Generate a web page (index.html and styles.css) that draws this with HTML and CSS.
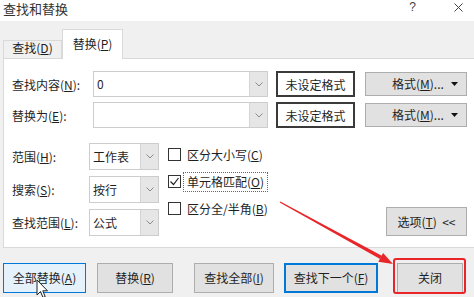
FILE: index.html
```html
<!DOCTYPE html>
<html lang="zh-CN">
<head>
    <meta charset="UTF-8">
    <meta name="viewport" content="width=device-width, initial-scale=1.0">
    <title>查找和替换</title>
    <link rel="stylesheet" href="styles.css">
</head>
<body>
    <div class="dialog">
        <div class="titlebar">
            <span class="title">查找和替换</span>
            <span class="help">?</span>
            <span class="close-x">
                <svg width="9" height="9" viewBox="0 0 9 9"><path d="M0.5 0.5 L8.5 8.5 M8.5 0.5 L0.5 8.5" stroke="#444" stroke-width="1"/></svg>
            </span>
        </div>

        <div class="tabs">
            <div class="tab">查找(<u>D</u>)</div>
            <div class="tab active">替换(<u>P</u>)</div>
        </div>

        <div class="panel">
            <div class="field-row">
                <span class="field-label">查找内容(<u>N</u>):</span>
                <div class="combo">
                    <span class="combo-text">0</span>
                    <span class="drop"><svg width="8" height="5" viewBox="0 0 8 5"><path d="M0.5 0.5 L4 4 L7.5 0.5" fill="none" stroke="#8a8a8a"/></svg></span>
                </div>
                <div class="preview">未设定格式</div>
                <button class="btn format-btn">格式(<u>M</u>)... <svg class="caret" width="7" height="4" viewBox="0 0 7 4"><path d="M0 0 H7 L3.5 4 Z" fill="#111"/></svg></button>
            </div>
            <div class="field-row">
                <span class="field-label">替换为(<u>E</u>):</span>
                <div class="combo">
                    <span class="combo-text"></span>
                    <span class="drop"><svg width="8" height="5" viewBox="0 0 8 5"><path d="M0.5 0.5 L4 4 L7.5 0.5" fill="none" stroke="#8a8a8a"/></svg></span>
                </div>
                <div class="preview">未设定格式</div>
                <button class="btn format-btn">格式(<u>M</u>)... <svg class="caret" width="7" height="4" viewBox="0 0 7 4"><path d="M0 0 H7 L3.5 4 Z" fill="#111"/></svg></button>
            </div>

            <div class="options">
                <div class="selects">
                    <div class="select-row">
                        <span class="opt-label">范围(<u>H</u>):</span>
                        <div class="select">
                            <span class="select-text">工作表</span>
                            <span class="drop"><svg width="8" height="5" viewBox="0 0 8 5"><path d="M0.5 0.5 L4 4 L7.5 0.5" fill="none" stroke="#8a8a8a"/></svg></span>
                        </div>
                    </div>
                    <div class="select-row">
                        <span class="opt-label">搜索(<u>S</u>):</span>
                        <div class="select">
                            <span class="select-text">按行</span>
                            <span class="drop"><svg width="8" height="5" viewBox="0 0 8 5"><path d="M0.5 0.5 L4 4 L7.5 0.5" fill="none" stroke="#8a8a8a"/></svg></span>
                        </div>
                    </div>
                    <div class="select-row">
                        <span class="opt-label">查找范围(<u>L</u>):</span>
                        <div class="select">
                            <span class="select-text">公式</span>
                            <span class="drop"><svg width="8" height="5" viewBox="0 0 8 5"><path d="M0.5 0.5 L4 4 L7.5 0.5" fill="none" stroke="#8a8a8a"/></svg></span>
                        </div>
                    </div>
                </div>

                <div class="checks">
                    <div class="check-row">
                        <span class="box"></span>
                        <span class="check-label">区分大小写(<u>C</u>)</span>
                    </div>
                    <div class="check-row">
                        <span class="box"><svg width="11" height="11" viewBox="0 0 11 11"><path d="M1.5 5.5 L4.5 8.5 L9.5 2" fill="none" stroke="#222" stroke-width="1.2"/></svg></span>
                        <span class="check-label focus">单元格匹配(<u>O</u>)</span>
                    </div>
                    <div class="check-row">
                        <span class="box"></span>
                        <span class="check-label">区分全/半角(<u>B</u>)</span>
                    </div>
                </div>

                <button class="btn options-btn">选项(<u>T</u>)&nbsp;&nbsp;&lt;&lt;</button>
            </div>
        </div>

        <div class="actions">
            <button class="btn btn-all default">全部替换(<u>A</u>)</button>
            <button class="btn btn-replace">替换(<u>R</u>)</button>
            <button class="btn btn-findall">查找全部(<u>I</u>)</button>
            <button class="btn btn-next focused">查找下一个(<u>F</u>)</button>
            <div class="close-wrap">
                <button class="btn btn-close">关闭</button>
            </div>
        </div>

        <!-- annotation: red arrow pointing at the close button -->
        <svg class="arrow" width="474" height="297" viewBox="0 0 474 297">
            <polygon points="280.3,201.4 279.7,202.6 380.1,258.9 381.8,255.7" fill="#e8262a"/>
            <polygon points="393,264 378.3,261.7 383.1,252.9" fill="#e8262a"/>
        </svg>

        <svg class="cursor" width="13" height="20" viewBox="0 0 13 20">
            <path d="M1 1 L1 16 L4.5 12.5 L7 18.5 L9.2 17.6 L6.8 11.8 L11.5 11.8 Z" fill="#fff" stroke="#222" stroke-width="1"/>
        </svg>
    </div>
</body>
</html>
```

FILE: styles.css
```css
* {
    box-sizing: border-box;
}
body {
    margin: 0;
    width: 474px;
    height: 297px;
    overflow: hidden;
    background: #f0f0f0;
    font-family: "Noto Sans CJK SC", "Noto Sans", sans-serif;
    font-size: 12px;
    color: #1f1f1f;
}
u {
    text-decoration-thickness: 1px;
    text-underline-offset: 1px;
}
.dialog {
    position: relative;
    height: 297px;
}
.titlebar {
    height: 21px;
    background: #fff;
    display: flex;
    align-items: flex-start;
    overflow: hidden;
}
.title {
    margin: 2px 0 0 3px;
    font-size: 13px;
    line-height: 14px;
    color: #333;
}
.help {
    margin: 1px 0 0 auto;
    font-family: "Liberation Sans", sans-serif;
    font-size: 12px;
    line-height: 13px;
    color: #444;
}
.close-x {
    margin: 3px 11px 0 38px;
    display: flex;
}
.tabs {
    height: 37px;
    display: flex;
    align-items: flex-end;
    padding-left: 3px;
}
.tab {
    width: 59px;
    height: 18px;
    border: 1px solid #d9d9d9;
    border-bottom: none;
    background: #f0f0f0;
    display: flex;
    align-items: center;
    justify-content: center;
    padding-bottom: 3px;
    line-height: 16px;
}
.tab.active {
    width: 61px;
    height: 30px;
    margin-bottom: -1px;
    background: #fff;
    position: relative;
    padding-bottom: 1px;
}
.panel {
    margin-left: 3px;
    width: 472px;
    background: #fff;
    border: 1px solid #d9d9d9;
    padding: 12px 7px 11px 8px;
}
.field-row {
    display: flex;
    align-items: center;
    height: 26px;
}
.field-row + .field-row {
    margin-top: 5px;
}
.field-label {
    width: 81px;
}
.combo {
    width: 175px;
    height: 26px;
    border: 1px solid #cdcdcd;
    display: flex;
}
.combo-text {
    flex: 1;
    padding-left: 3px;
    line-height: 24px;
}
.drop {
    width: 18px;
    border-left: 1px solid #d4d4d4;
    background: #e6e6e6;
    display: flex;
    align-items: center;
    justify-content: center;
}
.preview {
    margin-left: 8px;
    width: 79px;
    height: 26px;
    border: 2px solid #3a3a3a;
    display: flex;
    align-items: center;
    justify-content: center;
}
.btn {
    font: inherit;
    color: inherit;
    background: #e1e1e1;
    border: 1px solid #adadad;
    padding: 0;
    display: flex;
    align-items: center;
    justify-content: center;
    line-height: 16px;
}
.format-btn {
    margin-left: 10px;
    width: 102px;
    height: 24px;
    justify-content: flex-start;
    padding-left: 26px;
}
.caret {
    margin: 0 8px 0 auto;
}
.options {
    display: flex;
    margin-top: 15px;
}
.selects {
    display: flex;
    flex-direction: column;
    gap: 6px;
}
.select-row {
    display: flex;
    align-items: center;
    height: 27px;
}
.opt-label {
    width: 77px;
}
.select {
    width: 70px;
    height: 27px;
    border: 1px solid #cdcdcd;
    display: flex;
}
.select-text {
    flex: 1;
    padding-left: 3px;
    line-height: 25px;
}
.checks {
    margin: -2px 0 0 9px;
    display: flex;
    flex-direction: column;
}
.check-row {
    height: 27px;
    display: flex;
    align-items: center;
}
.box {
    width: 13px;
    height: 13px;
    border: 1px solid #333;
    background: #fff;
    display: flex;
    align-items: center;
    justify-content: center;
}
.check-label {
    margin-left: 2px;
    padding: 1px 3px;
    border: 1px dotted transparent;
    line-height: 16px;
}
.check-label.focus {
    border-color: #666;
}
.options-btn {
    margin-left: auto;
    align-self: flex-end;
    width: 81px;
    height: 29px;
}
.actions {
    display: flex;
    align-items: flex-start;
    margin-top: 15px;
    padding-left: 3px;
}
.actions .btn {
    height: 30px;
}
.btn-all {
    width: 83px;
}
.btn.default {
    background: #e5f1fb;
    border-color: #0078d7;
}
.btn-replace {
    width: 76px;
    margin-left: 11px;
}
.btn-findall {
    width: 80px;
    margin-left: 21px;
}
.btn-next {
    width: 94px;
    margin-left: 10px;
}
.btn.focused {
    border: 2px solid #0078d7;
}
.close-wrap {
    position: relative;
    margin-left: 19px;
}
.btn-close {
    width: 66px;
}
.close-wrap::after {
    content: "";
    position: absolute;
    left: -4px;
    top: -5px;
    right: -3px;
    bottom: -1px;
    border: 2px solid #e8262a;
    border-radius: 3px;
}
.arrow {
    position: absolute;
    left: 0;
    top: 0;
    pointer-events: none;
}
.cursor {
    position: absolute;
    left: 36px;
    top: 279px;
    pointer-events: none;
}
```
